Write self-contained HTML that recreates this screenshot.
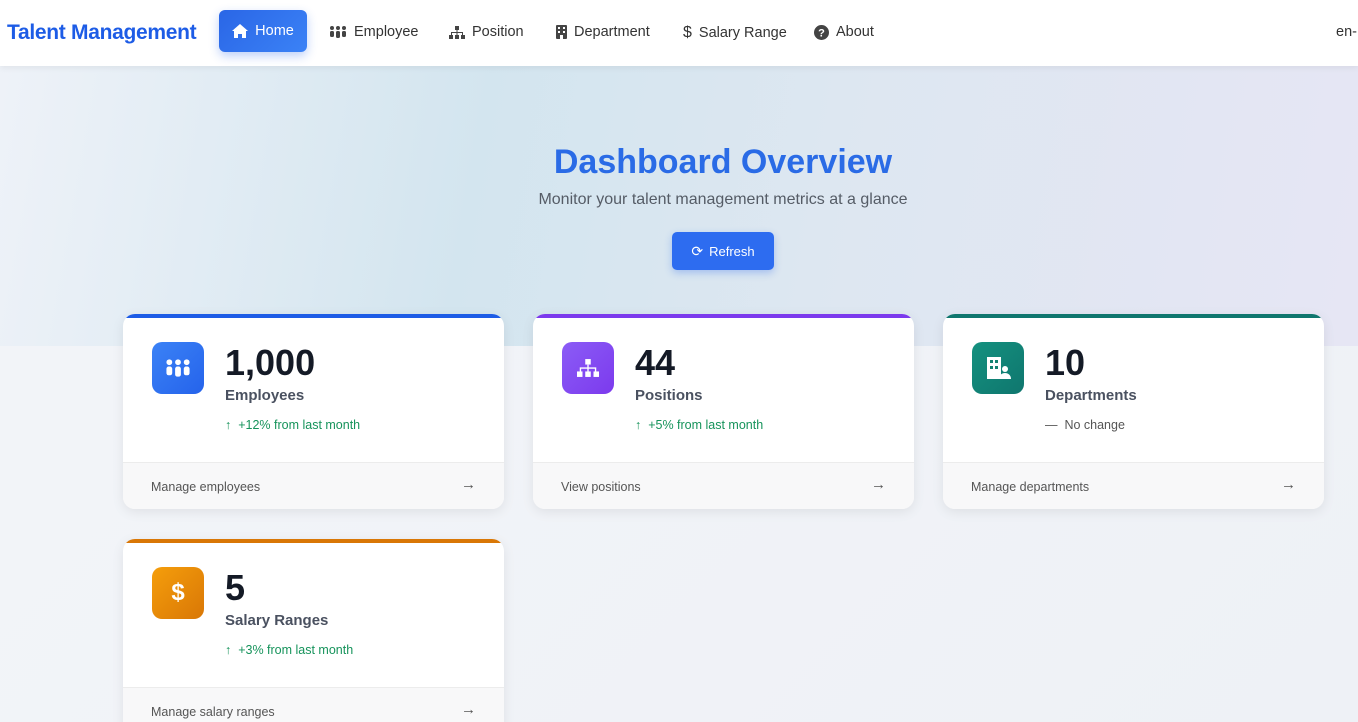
<!DOCTYPE html>
<html><head><meta charset="utf-8"><style>
*{margin:0;padding:0;box-sizing:border-box}
html,body{width:1358px;height:722px;overflow:hidden}
body{font-family:"Liberation Sans",sans-serif;background:linear-gradient(135deg,#f3f5f9,#eef1f6);position:relative}
.nav{position:absolute;top:0;left:0;width:1358px;height:66px;background:#fff;box-shadow:0 2px 6px rgba(0,0,0,.06);z-index:2}
.brand{position:absolute;left:7px;top:21px;font-size:21px;font-weight:bold;color:#1d5ce6;letter-spacing:-.3px}
.ni{position:absolute;top:24px;font-size:14.5px;color:#333;display:flex;align-items:center;gap:7px}
.home{position:absolute;left:219px;top:10px;width:88px;height:42px;background:linear-gradient(135deg,#2a66e6,#3b82f6);border-radius:6px;color:#fff;font-size:14.5px;display:flex;align-items:center;justify-content:center;gap:7px;box-shadow:0 4px 10px rgba(37,99,235,.3)}
.hero{position:absolute;top:66px;left:0;width:1358px;height:280px;background:linear-gradient(100deg,#eef2f8 0%,#d3e5ef 35%,#dde7f1 60%,#e6e6f4 100%)}
.c{position:absolute;left:88px;width:1270px;text-align:center}
h1{top:143px;font-size:34px;color:#2a6be6;font-weight:bold}
.sub{top:191px;font-size:16px;color:#555c66}
.btn{position:absolute;left:672px;top:232px;width:102px;height:38px;background:#2d6cf0;border-radius:5px;color:#fff;font-size:13px;display:flex;align-items:center;justify-content:center;gap:6px;box-shadow:0 3px 8px rgba(37,99,235,.3)}
.card{position:absolute;width:381px;height:195px;background:#fff;border-radius:12px;box-shadow:0 3px 12px rgba(0,0,0,.08);overflow:hidden;z-index:1}
.card .bar{height:4px}
.ic{position:absolute;left:29px;top:28px;width:52px;height:52px;border-radius:10px;display:flex;align-items:center;justify-content:center}
.num{position:absolute;left:102px;top:28px;font-size:36px;font-weight:bold;color:#141a26}
.lab{position:absolute;left:102px;top:73px;font-size:15px;font-weight:bold;color:#4a5160}
.tr{position:absolute;left:102px;top:104px;font-size:12.5px;color:#16935b}
.tr.n{color:#555}
.ft{position:absolute;left:0;top:148px;width:100%;height:47px;background:#f8f8f9;border-top:1px solid #ececec;font-size:12.5px;color:#555;padding:17px 28px}
.ft span{position:absolute;right:28px;top:13px;font-size:15px}
</style></head><body>
<div class="nav">
<div class="brand">Talent Management</div>
<div class="home"><svg width="16" height="14" viewBox="0 0 16 14"><path d="M8 0L0 7h2v7h4v-4h4v4h4V7h2z" fill="#fff"/></svg>Home</div>
<div class="ni" style="left:329px"><svg width="18" height="12" viewBox="0 0 18 12" fill="#444"><circle cx="3" cy="2" r="2"/><circle cx="9" cy="2" r="2"/><circle cx="15" cy="2" r="2"/><rect x="1" y="5" width="4" height="6" rx="1.5"/><rect x="7" y="5" width="4" height="7" rx="1.5"/><rect x="13" y="5" width="4" height="6" rx="1.5"/></svg>Employee</div>
<div class="ni" style="left:449px"><svg width="16" height="13" viewBox="0 0 16 13" fill="#444"><rect x="6" y="0" width="4" height="4"/><rect x="0" y="9" width="4" height="4"/><rect x="6" y="9" width="4" height="4"/><rect x="12" y="9" width="4" height="4"/><path d="M7.5 4h1v2H14v3h-1V7H8.5v2h-1V7H3v2H2V6h5.5z"/></svg>Position</div>
<div class="ni" style="left:556px"><svg width="11" height="14" viewBox="0 0 11 14"><rect width="11" height="14" rx="1" fill="#444"/><g fill="#fff"><rect x="2" y="2" width="2" height="2"/><rect x="7" y="2" width="2" height="2"/><rect x="2" y="6" width="2" height="2"/><rect x="7" y="6" width="2" height="2"/><rect x="4" y="10" width="3" height="4"/></g></svg>Department</div>
<div class="ni" style="left:683px"><span style="font-size:16px">$</span>Salary Range</div>
<div class="ni" style="left:814px"><svg width="15" height="15" viewBox="0 0 15 15"><circle cx="7.5" cy="7.5" r="7.5" fill="#444"/><text x="7.5" y="11.5" font-size="11" font-weight="bold" text-anchor="middle" fill="#fff" font-family="Liberation Sans">?</text></svg>About</div>
<div class="ni" style="left:1336px">en-</div>
</div>
<div class="hero"></div>
<h1 class="c">Dashboard Overview</h1>
<div class="c sub">Monitor your talent management metrics at a glance</div>
<div class="btn"><span style="font-size:14px">⟳</span>Refresh</div>

<div class="card" style="left:123px;top:314px"><div class="bar" style="background:#1d5ce6"></div>
<div class="ic" style="background:linear-gradient(135deg,#3b82f6,#2563eb)"><svg width="26" height="18" viewBox="0 0 18 12" fill="#fff"><circle cx="3" cy="2" r="2"/><circle cx="9" cy="2" r="2"/><circle cx="15" cy="2" r="2"/><rect x="1" y="5" width="4" height="6" rx="1.5"/><rect x="7" y="5" width="4" height="7" rx="1.5"/><rect x="13" y="5" width="4" height="6" rx="1.5"/></svg></div>
<div class="num">1,000</div><div class="lab">Employees</div><div class="tr">↑ &nbsp;+12% from last month</div>
<div class="ft">Manage employees<span>→</span></div></div>

<div class="card" style="left:533px;top:314px"><div class="bar" style="background:#7c3aed"></div>
<div class="ic" style="background:linear-gradient(135deg,#8b5cf6,#7c3aed)"><svg width="22" height="18" viewBox="0 0 16 13" fill="#fff"><rect x="6" y="0" width="4" height="4"/><rect x="0" y="9" width="4" height="4"/><rect x="6" y="9" width="4" height="4"/><rect x="12" y="9" width="4" height="4"/><path d="M7.5 4h1v2H14v3h-1V7H8.5v2h-1V7H3v2H2V6h5.5z"/></svg></div>
<div class="num">44</div><div class="lab">Positions</div><div class="tr">↑ &nbsp;+5% from last month</div>
<div class="ft">View positions<span>→</span></div></div>

<div class="card" style="left:943px;top:314px"><div class="bar" style="background:#0f766e"></div>
<div class="ic" style="background:linear-gradient(135deg,#14917f,#0f766e)"><svg width="26" height="22" viewBox="0 0 26 22"><rect x="2" y="0" width="14" height="22" fill="#fff"/><g fill="#128270"><rect x="5" y="3" width="3" height="3"/><rect x="10" y="3" width="3" height="3"/><rect x="5" y="9" width="3" height="3"/><rect x="10" y="9" width="3" height="3"/></g><circle cx="20" cy="12" r="3" fill="#fff"/><path d="M14 22c0-4 3-6 6-6s6 2 6 6z" fill="#fff"/></svg></div>
<div class="num">10</div><div class="lab">Departments</div><div class="tr n">— &nbsp;No change</div>
<div class="ft">Manage departments<span>→</span></div></div>

<div class="card" style="left:123px;top:539px"><div class="bar" style="background:#d97706"></div>
<div class="ic" style="background:linear-gradient(135deg,#f59e0b,#d97706);color:#fff;font-size:24px;font-weight:bold">$</div>
<div class="num">5</div><div class="lab">Salary Ranges</div><div class="tr">↑ &nbsp;+3% from last month</div>
<div class="ft">Manage salary ranges<span>→</span></div></div>
</body></html>
